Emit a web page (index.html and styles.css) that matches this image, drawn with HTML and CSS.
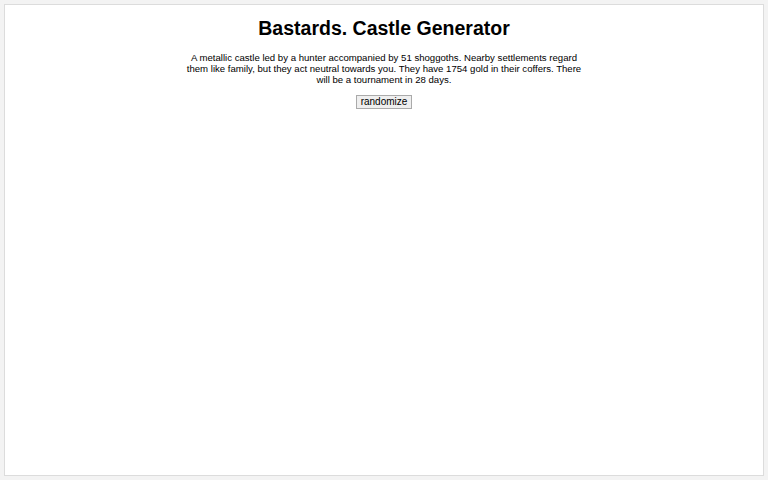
FILE: index.html
```html
<html>

<head>
    <meta charset="utf-8">
    <title>Bastards. Castle Generator</title>
    <link rel="stylesheet" href="styles.css">
</head>

<body>
    <div class="page">
        <h1 class="title">Bastards. Castle Generator</h1>
        <p id="castle" class="castle">A metallic castle led by a hunter accompanied by 51 shoggoths. Nearby settlements regard them like family, but they act neutral towards you. They have 1754 gold in their coffers. There will be a tournament in 28 days.</p>
        <div class="row">
            <button id="randomize">randomize</button>
        </div>
    </div>
</body>

</html>
```
FILE: styles.css
```css
html, body{
    margin: 0;
    height: 100%;
}

body{
    background: #f3f3f3;
    padding: 4px 4px 4px 4px;
    box-sizing: border-box;
    font-family: "Liberation Sans", Arial, sans-serif;
    color: #000;
}

.page{
    background: #fff;
    border: 1px solid #dcdcdc;
    height: 100%;
    box-sizing: border-box;
    text-align: center;
    padding-top: 14px;
}

.title{
    margin: 0;
    font-size: 19.5px;
    font-weight: bold;
    line-height: 19px;
}

.castle{
    width: 396px;
    margin: 14px auto 0;
    font-size: 9.6px;
    line-height: 11px;
}

.row{
    margin-top: 10px;
}

#randomize{
    font-family: "Liberation Sans", Arial, sans-serif;
    font-size: 10px;
    height: 14px;
    line-height: 10px;
    padding: 0 4px;
    background: #efefef;
    border: 1px solid #aaa;
    border-radius: 0;
    color: #000;
}
```
